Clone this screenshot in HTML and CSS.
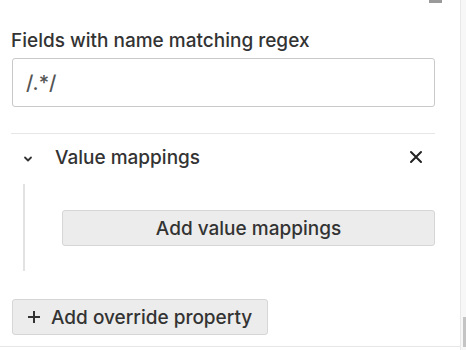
FILE: index.html
```html
<!DOCTYPE html>
<html lang="en">

<head>
  <meta charset="UTF-8" />
  <meta name="viewport" content="width=device-width, initial-scale=1" />
  <title>Field override</title>
  <link rel="stylesheet" href="styles.css">
</head>

<body>
  <div class="panel">
    <div class="cut-top">
      <span class="cut-icon"></span>
    </div>

    <label class="field-label" for="matcher">Fields with name matching regex</label>
    <input class="text-input" id="matcher" type="text" value="/.*/" />

    <hr class="divider" />

    <div class="prop-head">
      <svg class="chevron" width="12" height="12" viewBox="0 0 12 12">
        <path d="M3 4.5 L6 7.5 L9 4.5" fill="none" stroke="#333" stroke-width="1.8" stroke-linecap="round" stroke-linejoin="round" />
      </svg>
      <span class="prop-title">Value mappings</span>
      <svg class="close" width="14" height="14" viewBox="0 0 14 14">
        <path d="M2 2 L12 12 M12 2 L2 12" stroke="#222" stroke-width="2" stroke-linecap="round" />
      </svg>
    </div>

    <div class="prop-body">
      <button class="btn btn-wide" type="button">Add value mappings</button>
    </div>

    <button class="btn btn-add" type="button">
      <svg class="plus" width="14" height="14" viewBox="0 0 14 14">
        <path d="M7 1 V13 M1 7 H13" stroke="#333" stroke-width="2" />
      </svg>
      Add override property
    </button>
  </div>
  <div class="scroll-track"><div class="scroll-thumb"></div></div>
</body>

</html>
```

FILE: styles.css
```css
body {
  margin: 0;
  width: 466px;
  height: 350px;
  overflow: hidden;
  background-color: white;
  font-family: Inter, "Noto Sans", sans-serif;
  color: #2f2f2f;
  display: flex;
}

.panel {
  width: 461px;
  height: 347px;
  box-sizing: border-box;
  padding: 0 25px 0 11px;
  border-bottom: 1px solid #e6e6e6;
  display: flex;
  flex-direction: column;
}

.cut-top {
  height: 29px;
  display: flex;
  justify-content: flex-end;
  align-items: flex-start;
}

.cut-icon {
  margin-right: -7px;
  width: 13px;
  height: 3px;
  background-color: #9a9a9a;
}

.field-label {
  font-size: 19px;
  line-height: 24px;
  font-weight: 500;
  color: #333;
}

.text-input {
  margin-top: 5px;
  margin-left: 1px;
  height: 49px;
  box-sizing: border-box;
  border: 1px solid #c9c9c9;
  border-radius: 3px;
  padding: 0 13px;
  font-family: inherit;
  font-size: 20px;
  font-weight: 500;
  color: #555;
}

.divider {
  margin: 26px 0 0 0;
  border: none;
  border-top: 1px solid #e6e6e6;
}

.prop-head {
  height: 46px;
  display: flex;
  align-items: center;
  padding-left: 11px;
}

.chevron {
  margin-top: 3px;
  margin-right: 21px;
}

.prop-title {
  flex: 1;
  font-size: 19px;
  font-weight: 500;
  color: #333;
}

.close {
  margin-right: 12px;
}

.prop-body {
  margin-left: 12px;
  margin-top: 4px;
  border-left: 2px solid #e2e2e2;
  padding: 26px 0 25px 37px;
}

.btn {
  font-family: inherit;
  font-size: 19px;
  font-weight: 500;
  color: #333;
  background-color: #ececec;
  border: 1px solid #d6d6d6;
  border-radius: 3px;
  height: 36px;
  cursor: pointer;
}

.btn-wide {
  width: 100%;
}

.btn-add {
  margin-top: 28px;
  margin-left: 1px;
  align-self: flex-start;
  width: 256px;
  padding: 0 14px;
  display: flex;
  align-items: center;
  gap: 10px;
}

.scroll-track {
  width: 5px;
  height: 350px;
  border-left: 1px solid #e8e8e8;
  background-color: #f7f7f7;
  display: flex;
  align-items: flex-end;
}

.scroll-thumb {
  margin-left: 2px;
  width: 3px;
  height: 30px;
  margin-bottom: 3px;
  background-color: #c4c4c4;
}
```
